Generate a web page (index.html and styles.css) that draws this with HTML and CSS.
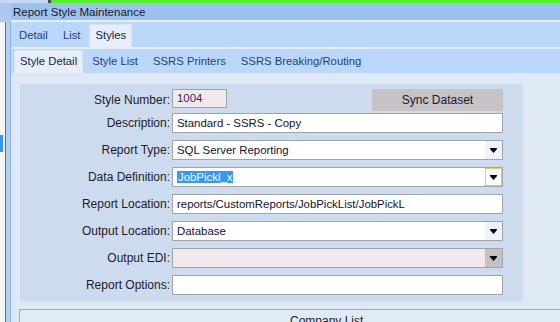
FILE: index.html
```html
<!DOCTYPE html>
<html lang="en">
<head>
  <meta charset="UTF-8" />
  <title>Report Style Maintenance</title>
  <link rel="stylesheet" href="styles.css">
</head>
<body>

  <!-- strip of the host window above -->
  <div class="topline">
    <span class="tl-left"></span>
    <span class="tl-edge"></span>
    <span class="tl-green"></span>
  </div>

  <div class="shell">
    <div class="side">
      <div class="side-head"></div>
      <div class="side-body"><span class="side-mark"></span></div>
    </div>

    <div class="window">
      <div class="titlebar">Report Style Maintenance</div>

      <div class="tabs tabs-main">
        <span class="tab">Detail</span>
        <span class="tab">List</span>
        <span class="tab active">Styles</span>
      </div>

      <div class="tabs tabs-sub">
        <span class="tab active">Style Detail</span>
        <span class="tab">Style List</span>
        <span class="tab">SSRS Printers</span>
        <span class="tab">SSRS Breaking/Routing</span>
      </div>

      <div class="panel">
        <div class="group">

          <div class="row row-first">
            <label>Style Number:</label>
            <div class="split">
              <div class="field disabled short">1004</div>
              <button class="btn">Sync Dataset</button>
            </div>
          </div>

          <div class="row">
            <label>Description:</label>
            <div class="field">Standard - SSRS - Copy</div>
          </div>

          <div class="row">
            <label>Report Type:</label>
            <div class="field combo">
              <span class="combo-text">SQL Server Reporting</span>
              <span class="arrow"><svg width="7" height="5" viewBox="0 0 7 5"><rect x="0" y="0" width="7" height="1" fill="#000"/><polygon points="0,1 7,1 3.5,5" fill="#000"/></svg></span>
            </div>
          </div>

          <div class="row">
            <label>Data Definition:</label>
            <div class="field combo">
              <span class="combo-text"><span class="selected">JobPickl_x</span></span>
              <span class="arrow focus"><svg width="7" height="5" viewBox="0 0 7 5"><rect x="0" y="0" width="7" height="1" fill="#000"/><polygon points="0,1 7,1 3.5,5" fill="#000"/></svg></span>
            </div>
          </div>

          <div class="row">
            <label>Report Location:</label>
            <div class="field">reports/CustomReports/JobPickList/JobPickL</div>
          </div>

          <div class="row">
            <label>Output Location:</label>
            <div class="field combo">
              <span class="combo-text">Database</span>
              <span class="arrow"><svg width="7" height="5" viewBox="0 0 7 5"><rect x="0" y="0" width="7" height="1" fill="#000"/><polygon points="0,1 7,1 3.5,5" fill="#000"/></svg></span>
            </div>
          </div>

          <div class="row">
            <label>Output EDI:</label>
            <div class="field combo disabled">
              <span class="combo-text"></span>
              <span class="arrow grey"><svg width="7" height="5" viewBox="0 0 7 5"><rect x="0" y="0" width="7" height="1" fill="#000"/><polygon points="0,1 7,1 3.5,5" fill="#000"/></svg></span>
            </div>
          </div>

          <div class="row">
            <label>Report Options:</label>
            <div class="field"></div>
          </div>

        </div>

        <div class="company">Company List</div>
      </div>
    </div>
  </div>

</body>
</html>
```

FILE: styles.css
```css
body {
  margin: 0;
  width: 560px;
  height: 322px;
  overflow: hidden;
  font-family: "Liberation Sans", Arial, sans-serif;
  font-size: 12px;
  color: #1c1c2c;
  background: #dfe9f5;
}

.topline {
  display: flex;
  height: 3px;
}

.tl-left {
  width: 48px;
  background: #c4daf4;
}

.tl-edge {
  width: 3px;
  background: #4a4a4a;
}

.tl-green {
  flex: 1;
  background: #55f02a;
}

.shell {
  display: flex;
  height: 319px;
}

.side {
  width: 11px;
  flex-shrink: 0;
  display: flex;
  flex-direction: column;
}

.side-head {
  height: 19px;
  flex-shrink: 0;
  background: #a9c9f1;
}

.side-body {
  flex: 1;
  background: linear-gradient(to right, #f6f6f6 0, #f6f6f6 5px, #6e6e6e 5px, #6e6e6e 6px, #b3cff1 6px, #b3cff1 10px, #8fb4e6 10px);
}

.side-mark {
  display: block;
  width: 3px;
  height: 17px;
  margin-top: 113px;
  background: #3399ff;
}

.window {
  flex: 1;
  display: flex;
  flex-direction: column;
}

.titlebar {
  flex-shrink: 0;
  height: 17px;
  line-height: 18px;
  padding-left: 2px;
  font-size: 11.5px;
  color: #1a1a2a;
  background: #9dc1ee;
  border-bottom: 2px solid #e6eefa;
}

.tabs {
  flex-shrink: 0;
  display: flex;
  align-items: flex-end;
  gap: 3px;
  background: #bbd8fc;
  border-bottom: 2px solid #e6eefa;
  font-size: 11.3px;
  color: #243f7c;
}

.tab {
  padding: 0 6px;
  height: 23px;
  line-height: 23px;
}

.tab.active {
  background: #e6effb;
  border-radius: 3px 3px 0 0;
  box-shadow: inset 0 1px 0 #d6e4f6, inset 1px 0 0 #d6e4f6, inset -1px 0 0 #d6e4f6;
  color: #16264a;
}

.tabs-main {
  height: 25px;
  padding-left: 2px;
}

.tabs-sub {
  height: 24px;
  padding-left: 3px;
  border-bottom: none;
}

.tabs-sub .tab {
  height: 23px;
  line-height: 22px;
}

.panel {
  flex: 1;
  min-height: 0;
  background: #dfe9f5;
  padding-top: 11px;
}

.group {
  width: 483px;
  height: 212px;
  margin-left: 9px;
  padding: 5px 19px 0 0;
  background: #cddbee;
  border-radius: 4px;
  box-shadow: 1px 1px 0 #d4e0f0;
}

.row {
  display: grid;
  grid-template-columns: 150px 331px;
  column-gap: 2px;
  align-items: center;
  height: 20px;
  margin-top: 7px;
}

.row-first {
  height: 22px;
  margin-top: 0;
}

.row-first + .row {
  margin-top: 2px;
}

label {
  text-align: right;
  color: #1c1c2c;
}

.split {
  display: flex;
  justify-content: space-between;
  align-items: flex-start;
  height: 22px;
}

.field {
  box-sizing: border-box;
  height: 20px;
  line-height: 18px;
  padding-left: 4px;
  background: #ffffff;
  border: 1px solid #a3a3a3;
  color: #12122e;
  font-size: 11.4px;
  white-space: nowrap;
  overflow: hidden;
}

.field.disabled {
  background: #f0eaee;
}

.field.short {
  width: 55px;
  height: 19px;
  line-height: 17px;
  color: #3e1f5e;
}

.btn {
  width: 131px;
  height: 22px;
  border: none;
  padding: 0;
  background: #c6c2c6;
  font-family: "Liberation Sans", Arial, sans-serif;
  font-size: 12px;
  color: #1c1c2c;
}

.combo {
  display: flex;
  padding-left: 0;
}

.combo-text {
  flex: 1;
  padding-left: 4px;
}

.selected {
  background: #3399ff;
  color: #ffffff;
  padding: 0 1px;
}

.arrow {
  box-sizing: border-box;
  width: 17px;
  height: 18px;
  display: flex;
  align-items: center;
  justify-content: center;
  background: #eef2fd;
}

.arrow.focus {
  border: 1px solid #f2c85a;
  background: #ffffff;
}

.arrow.grey {
  background: #c4c0c4;
}

.company {
  margin: 8px 0 0 8px;
  height: 20px;
  padding: 4px 0 0 270px;
  border-top: 1px solid #a6aab2;
  border-left: 1px solid #a6aab2;
  background: #e1ebf7;
  color: #1c1c2c;
}
```
